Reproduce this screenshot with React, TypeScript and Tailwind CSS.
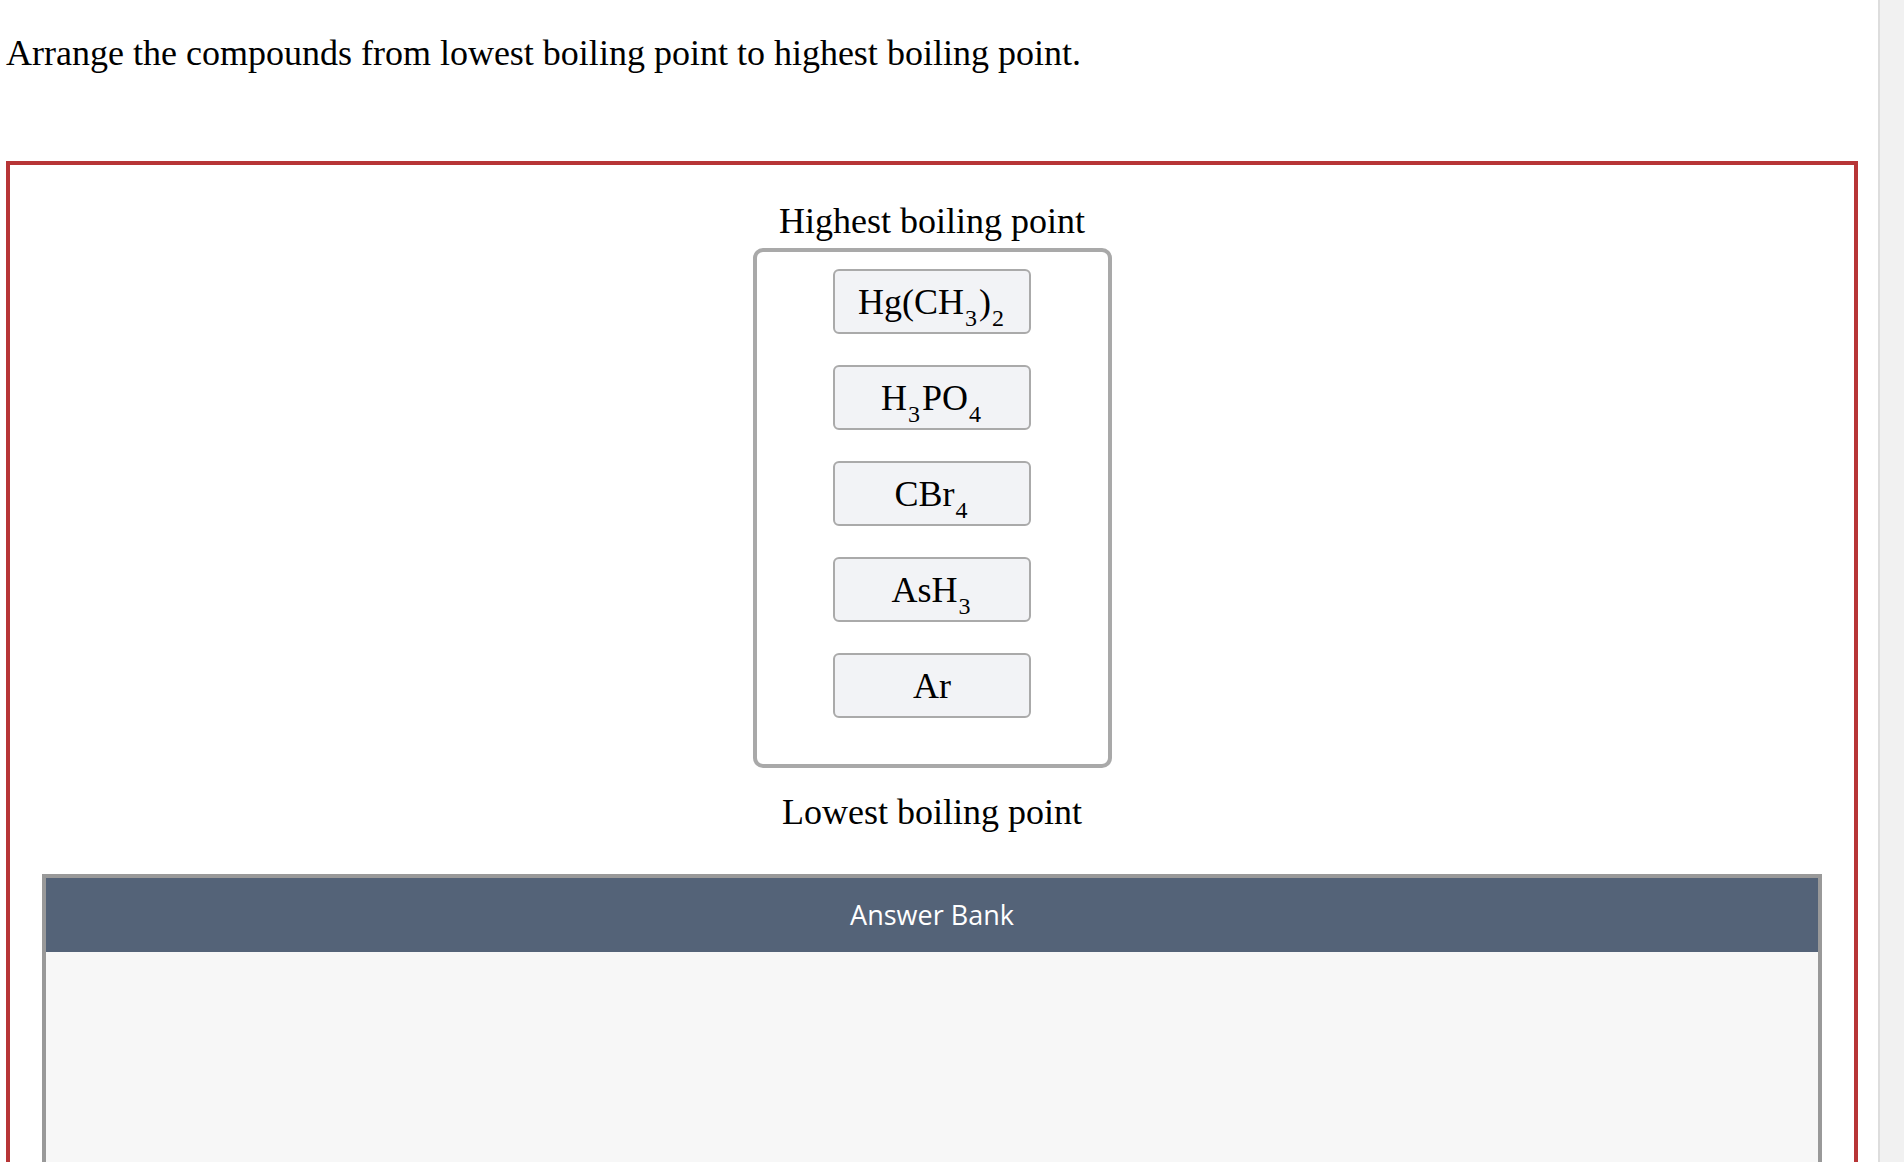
import React from "react";

type Part = { text: string; sub?: boolean };

const compounds: Part[][] = [
  [{ text: "Hg(CH" }, { text: "3", sub: true }, { text: ")" }, { text: "2", sub: true }],
  [{ text: "H" }, { text: "3", sub: true }, { text: "PO" }, { text: "4", sub: true }],
  [{ text: "CBr" }, { text: "4", sub: true }],
  [{ text: "AsH" }, { text: "3", sub: true }],
  [{ text: "Ar" }],
];

function Formula({ parts }: { parts: Part[] }) {
  return (
    <span className="whitespace-nowrap">
      {parts.map((p, i) =>
        p.sub ? (
          <span key={i} className="text-[24px] leading-[0] align-[-12px] pl-[1px] pr-[2px]">
            {p.text}
          </span>
        ) : (
          <span key={i}>{p.text}</span>
        )
      )}
    </span>
  );
}

export default function App() {
  return (
    <div className="h-screen overflow-hidden flex bg-white text-black font-['Liberation_Serif','Times_New_Roman',serif]">
      <div className="flex-1 min-w-0 flex flex-col">
        <h1 className="pl-[6px] pt-[33px] text-[36px] leading-[40px] font-normal">
          Arrange the compounds from lowest boiling point to highest boiling point.
        </h1>

        {/* question area */}
        <div className="mt-[88px] ml-[6px] mr-[20px] border-[4px] border-b-0 border-[#b73536] px-[32px] pt-[36px] flex-1 flex flex-col">
          <div className="flex flex-col items-center">
            <p className="text-[36px] leading-[40px] mb-[7px]">Highest boiling point</p>
            <div className="w-[359px] border-[4px] border-[#a9a9a9] rounded-[10px] pt-[17px] pb-[46px] flex flex-col items-center gap-[31px]">
              {compounds.map((c, i) => (
                <div
                  key={i}
                  className="w-[198px] h-[65px] flex items-center justify-center bg-[#f2f3f6] border-2 border-[#aaaaaa] rounded-md text-[36px] leading-[40px]"
                >
                  <Formula parts={c} />
                </div>
              ))}
            </div>
            <p className="text-[36px] leading-[40px] mt-[24px]">Lowest boiling point</p>
          </div>

          {/* answer bank */}
          <div className="mt-[42px] flex-1 flex flex-col border-[4px] border-b-0 border-[#999999]">
            <div className="h-[74px] bg-[#546378] flex items-center justify-center text-white text-[27px] font-medium font-['Open_Sans',sans-serif]">
              Answer Bank
            </div>
            <div className="flex-1 min-h-[300px] bg-[#f7f7f7]" />
          </div>
        </div>
      </div>

      {/* scrollbar track */}
      <div className="w-[26px] shrink-0 bg-[#f1f1f1] border-l-2 border-[#dddddd]" />
    </div>
  );
}
